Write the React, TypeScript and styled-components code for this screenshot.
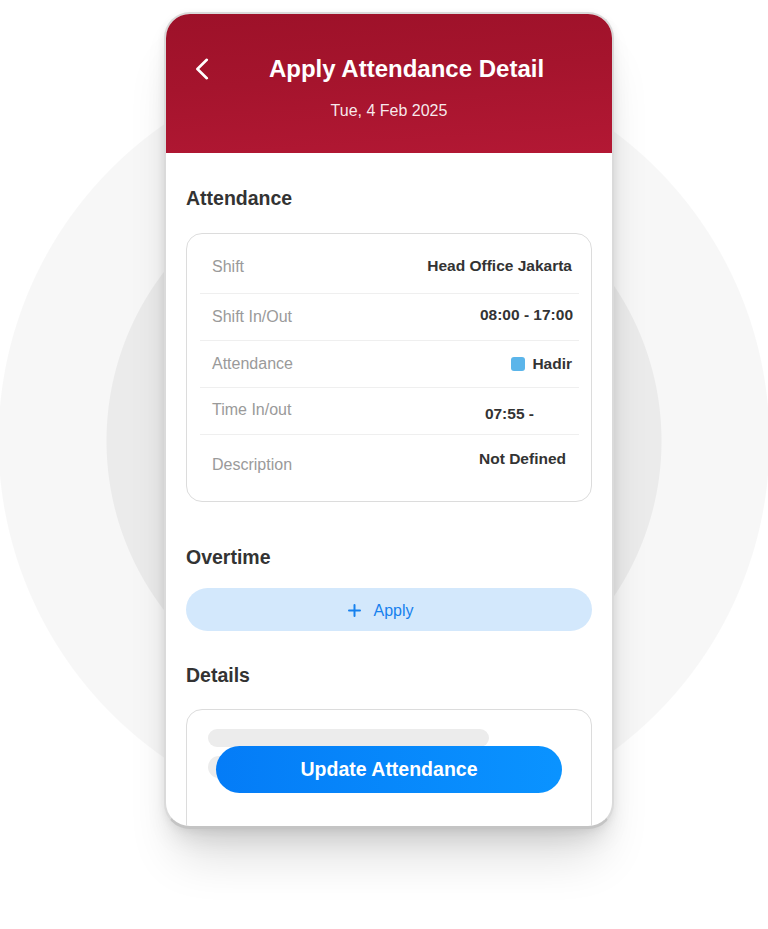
import styled, { createGlobalStyle } from 'styled-components';

const GlobalStyle = createGlobalStyle`
  * {
    box-sizing: border-box;
  }
  body {
    margin: 0;
    background: #ffffff;
    font-family: "Liberation Sans", Arial, sans-serif;
  }
`;

const Page = styled.div`
  width: 768px;
  height: 929px;
  padding-top: 12px;
  display: flex;
  flex-direction: column;
  align-items: center;
  background: radial-gradient(
    circle at 384px 441px,
    #ebebeb 0 277px,
    #f7f7f7 278px 385px,
    #ffffff 386px
  );
`;

const Phone = styled.div`
  position: relative;
  width: 450px;
  height: 817px;
  margin-left: 10px;
  display: flex;
  flex-direction: column;
  background: #ffffff;
  border: 2px solid #dadada;
  border-bottom: 3px solid #c4c4c4;
  border-radius: 26px;
  overflow: hidden;
  box-shadow: 0 40px 50px -14px rgba(0, 0, 0, 0.14), 0 14px 24px -6px rgba(0, 0, 0, 0.1),
    0 2px 8px rgba(0, 0, 0, 0.06);
`;

const Header = styled.header`
  height: 139px;
  flex-shrink: 0;
  padding-top: 41px;
  background: linear-gradient(176deg, #9d1129 0%, #a5142d 45%, #b31834 100%);
  color: #ffffff;
`;

const TitleRow = styled.div`
  display: flex;
  align-items: center;
  padding: 0 8px 0 29px;
  height: 28px;
`;

const BackButton = styled.span`
  width: 14px;
  height: 22px;
  display: flex;
`;

const Title = styled.h1`
  flex: 1;
  margin: 0;
  text-align: center;
  font-size: 24px;
  line-height: 28px;
  font-weight: 700;
`;

const DateText = styled.div`
  margin-top: 18px;
  text-align: center;
  font-size: 16px;
  line-height: 20px;
  color: rgba(255, 255, 255, 0.92);
`;

const Content = styled.main`
  padding: 33px 20px 0;
  display: flex;
  flex-direction: column;
`;

const SectionTitle = styled.h2<{ $gap: number }>`
  margin: ${(p) => p.$gap}px 0 0;
  font-size: 19.5px;
  line-height: 24px;
  font-weight: 700;
  color: #333333;
`;

const InfoCard = styled.section`
  margin-top: 23px;
  padding: 13px 12px 19px 13px;
  border: 1px solid #dcdcdc;
  border-radius: 16px;
`;

const Row = styled.div<{ $last?: boolean; $padRight: number }>`
  height: 47px;
  display: flex;
  align-items: center;
  justify-content: space-between;
  padding: 0 ${(p) => p.$padRight}px 0 12px;
  border-bottom: ${(p) => (p.$last ? 'none' : '1px solid #efefef')};
`;

const Label = styled.span<{ $dy: number }>`
  margin-top: ${(p) => p.$dy * 2}px;
  font-size: 16px;
  color: #9a9a9a;
`;

const Value = styled.span<{ $dy: number }>`
  margin-top: ${(p) => p.$dy * 2}px;
  display: flex;
  align-items: center;
  gap: 7px;
  font-size: 15.5px;
  font-weight: 700;
  color: #333333;
`;

const StatusDot = styled.span`
  width: 14px;
  height: 14px;
  border-radius: 3px;
  background: #5bb5ea;
`;

const ApplyButton = styled.button`
  margin-top: 19px;
  height: 43px;
  border: none;
  border-radius: 22px;
  background: #d3e8fc;
  color: #1781ee;
  font-family: inherit;
  font-size: 16px;
  display: flex;
  align-items: center;
  justify-content: center;
  gap: 12px;
  padding: 2px 16px 0 0;
`;

const DetailsCard = styled.section`
  margin-top: 22px;
  height: 220px;
  padding: 19px 21px;
  border: 1px solid #dcdcdc;
  border-radius: 16px;
  display: flex;
  flex-direction: column;
  gap: 9px;
`;

const Skeleton = styled.div<{ $w: number; $h: number }>`
  width: ${(p) => p.$w}px;
  height: ${(p) => p.$h}px;
  border-radius: ${(p) => p.$h / 2}px;
  background: #ececec;
`;

const UpdateButton = styled.button`
  position: absolute;
  left: 50%;
  bottom: 33px;
  transform: translateX(-50%);
  width: 346px;
  height: 47px;
  border: none;
  border-radius: 24px;
  background: linear-gradient(90deg, #047cf7 0%, #0a93ff 100%);
  color: #ffffff;
  font-family: inherit;
  font-size: 19.5px;
  font-weight: 700;
`;

const rows = [
  { label: 'Shift', value: 'Head Office Jakarta', ly: -3.5, vy: -4, pr: 7 },
  { label: 'Shift In/Out', value: '08:00 - 17:00', ly: -0.5, vy: -2.5, pr: 6 },
  { label: 'Attendance', value: 'Hadir', dot: true, ly: 0, vy: 0, pr: 7 },
  { label: 'Time In/out', value: '07:55 -', ly: -1.5, vy: 2.5, pr: 45 },
  { label: 'Description', value: 'Not Defined', ly: 6.5, vy: 0.5, pr: 13 },
];

function App() {
  return (
    <Page>
      <GlobalStyle />
      <Phone>
        <Header>
          <TitleRow>
            <BackButton>
              <svg width="14" height="22" viewBox="0 0 14 22" fill="none">
                <path
                  d="M11.8 1.8 L2.4 11 L11.8 20.2"
                  stroke="#ffffff"
                  strokeWidth="2.6"
                  strokeLinecap="round"
                  strokeLinejoin="round"
                />
              </svg>
            </BackButton>
            <Title>Apply Attendance Detail</Title>
          </TitleRow>
          <DateText>Tue, 4 Feb 2025</DateText>
        </Header>

        <Content>
          <SectionTitle $gap={0}>Attendance</SectionTitle>
          <InfoCard>
            {rows.map((r, i) => (
              <Row key={r.label} $last={i === rows.length - 1} $padRight={r.pr}>
                <Label $dy={r.ly}>{r.label}</Label>
                <Value $dy={r.vy}>
                  {r.dot && <StatusDot />}
                  {r.value}
                </Value>
              </Row>
            ))}
          </InfoCard>

          <SectionTitle $gap={43}>Overtime</SectionTitle>
          <ApplyButton>
            <svg width="13" height="13" viewBox="0 0 13 13" fill="none">
              <path d="M6.5 1 V12 M1 6.5 H12" stroke="#1781ee" strokeWidth="2" strokeLinecap="round" />
            </svg>
            Apply
          </ApplyButton>

          <SectionTitle $gap={32}>Details</SectionTitle>
          <DetailsCard>
            <Skeleton $w={281} $h={18} />
            <Skeleton $w={200} $h={22} />
          </DetailsCard>
        </Content>

        <UpdateButton>Update Attendance</UpdateButton>
      </Phone>
    </Page>
  );
}

export default App;
